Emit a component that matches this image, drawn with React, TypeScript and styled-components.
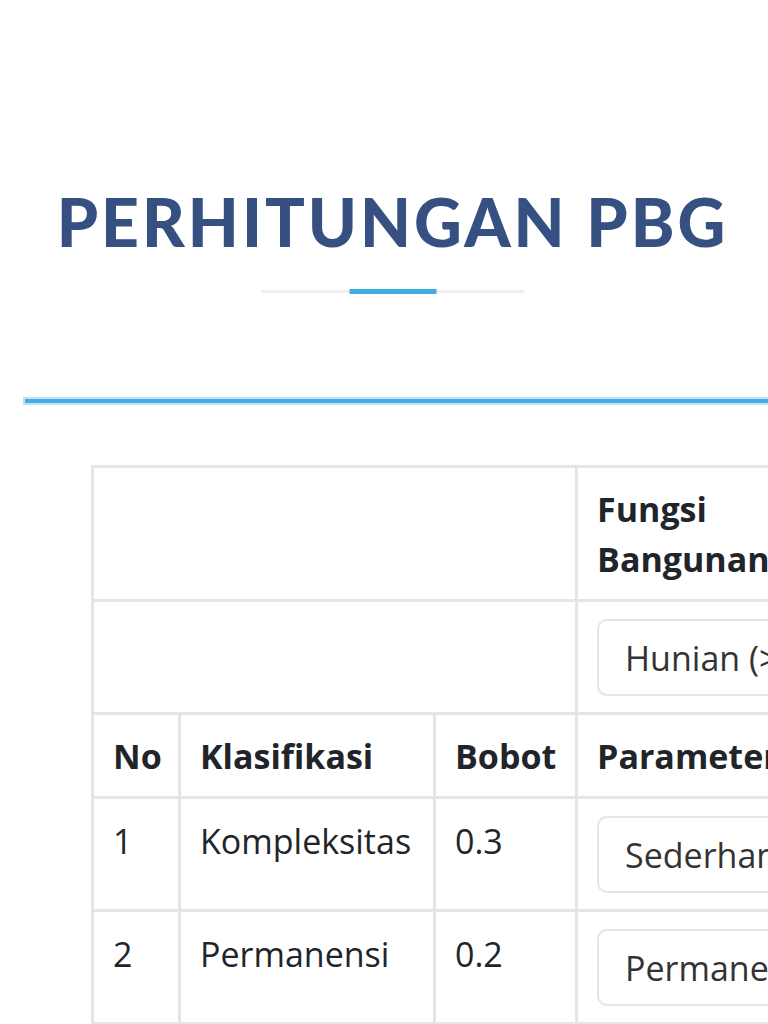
import styled, { createGlobalStyle } from 'styled-components';

const GlobalStyle = createGlobalStyle`
  html, body {
    margin: 0;
    padding: 0;
    background: #ffffff;
    overflow: hidden;
  }
  body {
    font-family: "Open Sans", "Liberation Sans", sans-serif;
    color: #212529;
  }
`;

const Page = styled.div`
  width: 785px;
  padding: 0 25px;
  box-sizing: border-box;
`;

const Header = styled.header`
  display: flex;
  flex-direction: column;
  align-items: center;
  padding-top: 182px;
`;

const Title = styled.h1`
  margin: 0;
  font-family: Lato, "Liberation Sans", sans-serif;
  font-weight: 900;
  font-size: 66px;
  line-height: 80px;
  letter-spacing: 3px;
  color: #355081;
  text-transform: uppercase;
  white-space: nowrap;
`;

const Divider = styled.div`
  position: relative;
  margin-top: 28px;
  width: 263px;
  height: 3px;
  background: #efefef;
`;

/* blue mark sitting on top of the grey divider */
const DividerMark = styled.span`
  position: absolute;
  left: 50%;
  top: -1px;
  width: 87px;
  height: 5px;
  transform: translateX(-50%);
  background: #3daee2;
`;

const BlueRule = styled.hr`
  margin: 106px 0 0;
  border: 0;
  height: 4px;
  background: #44aee2;
  box-shadow: 0 0 0 2px rgba(68, 174, 226, 0.35);
  width: 760px;
`;

const TableWrap = styled.div`
  margin: 62px 0 0 66px;
`;

const Table = styled.table`
  border-collapse: collapse;
  table-layout: fixed;
  width: 1000px;
  font-size: 34px;
  line-height: 50px;
`;

const Cell = styled.td`
  border: 3px solid #e2e5e9;
  padding: 17px 16px 16px 19px;
  vertical-align: top;
  text-align: left;
  white-space: nowrap;
`;

const HeadCell = styled(Cell).attrs({ as: 'th' })`
  padding-top: 16px;
  padding-bottom: 15px;
  font-weight: 700;
  vertical-align: middle;
`;

const Select = styled.div`
  display: flex;
  align-items: center;
  height: 73px;
  padding: 0 26px;
  border: 2px solid #e2e5e9;
  border-radius: 10px;
  color: #333;
  white-space: nowrap;
  overflow: hidden;
`;

const rows = [
  { no: 1, name: 'Kompleksitas', weight: '0.3', value: 'Sederhana' },
  { no: 2, name: 'Permanensi', weight: '0.2', value: 'Permanen' },
];

export default function App() {
  return (
    <Page>
      <GlobalStyle />
      <Header>
        <Title>Perhitungan PBG</Title>
        <Divider>
          <DividerMark />
        </Divider>
      </Header>
      <BlueRule />
      <TableWrap>
        <Table>
          <colgroup>
            <col style={{ width: 87 }} />
            <col style={{ width: 255 }} />
            <col style={{ width: 142 }} />
            <col style={{ width: 516 }} />
          </colgroup>
          <tbody>
            <tr>
              <Cell colSpan={3} />
              <HeadCell>
                Fungsi
                <br />
                Bangunan
              </HeadCell>
            </tr>
            <tr>
              <Cell colSpan={3} />
              <Cell>
                <Select>Hunian (&gt; 100 m²)</Select>
              </Cell>
            </tr>
            <tr>
              <HeadCell>No</HeadCell>
              <HeadCell>Klasifikasi</HeadCell>
              <HeadCell>Bobot</HeadCell>
              <HeadCell>Parameter</HeadCell>
            </tr>
            {rows.map((r) => (
              <tr key={r.no}>
                <Cell>{r.no}</Cell>
                <Cell>{r.name}</Cell>
                <Cell>{r.weight}</Cell>
                <Cell>
                  <Select>{r.value}</Select>
                </Cell>
              </tr>
            ))}
          </tbody>
        </Table>
      </TableWrap>
    </Page>
  );
}
